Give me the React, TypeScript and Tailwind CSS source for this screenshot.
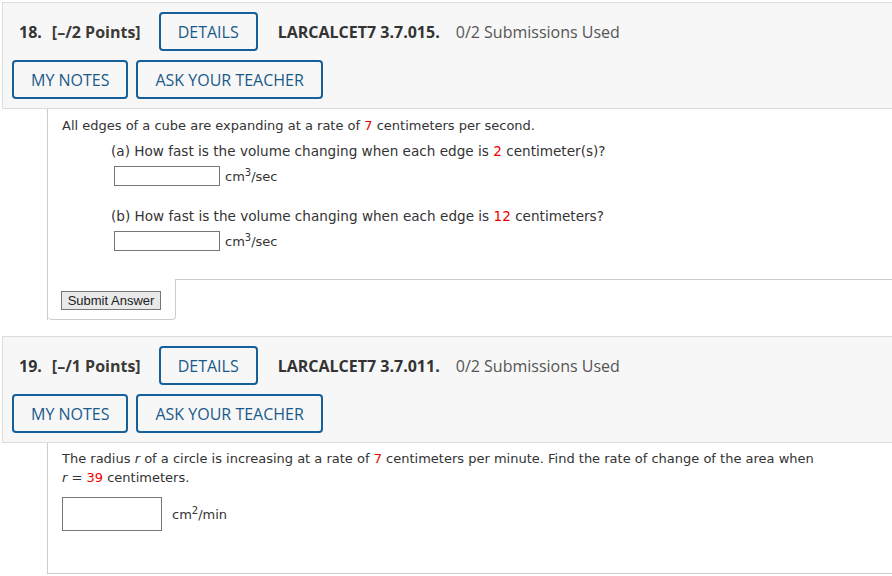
import React from 'react'

// ─── Header ─────────────────────────────────────────────────────────────────

function HeaderButton({ label }: { label: string }) {
  return (
    <button className="flex h-[39px] items-center rounded-[4px] border-2 border-[#16609a] bg-transparent px-[17px] text-[16px] uppercase text-[#1a5a8a]">
      {label}
    </button>
  )
}

function QuestionHeader({ num, points, code }: { num: number; points: string; code: string }) {
  return (
    <div className="ml-[2px] mr-[-20px] border border-[#dcdcdc] bg-[#f7f7f7] px-[9px] pb-[9px] pt-[9px] font-['Open_Sans',sans-serif]">
      <div className="flex h-[39px] items-center">
        <span className="ml-[7px] text-[16px] font-bold text-[#333]">{num}.</span>
        <span className="ml-[10px] text-[16px] font-bold text-[#3c3a36]">[–/{points} Points]</span>
        <div className="ml-[18px]">
          <HeaderButton label="Details" />
        </div>
        <span className="ml-[20px] text-[16px] font-bold text-[#333]">{code}</span>
        <span className="ml-[16px] text-[16px] text-[#555]">0/2 Submissions Used</span>
      </div>
      <div className="mt-[9px] flex gap-[8px]">
        <HeaderButton label="My Notes" />
        <HeaderButton label="Ask Your Teacher" />
      </div>
    </div>
  )
}

// ─── Bits ───────────────────────────────────────────────────────────────────

const Red = ({ children }: { children: React.ReactNode }) => <span className="text-[#e00]">{children}</span>

function Answer({ unit, sup }: { unit: string; sup: string }) {
  return (
    <div className="flex items-center text-[13px]">
      <input className="h-[20px] w-[106px] border border-[#767676] bg-white" />
      <span className="ml-[5px]">
        cm<sup className="text-[10px]">{sup}</sup>/{unit}
      </span>
    </div>
  )
}

// ─── App ────────────────────────────────────────────────────────────────────

export default function App() {
  return (
    <div className="h-[576px] w-[892px] overflow-hidden bg-white pt-[2px] text-[#333]">
      {/* Question 18 */}
      <QuestionHeader num={18} points="2" code="LARCALCET7 3.7.015." />
      <div className="ml-[47px] mr-[-20px] border-l border-[#ccc] font-['DejaVu_Sans',Verdana,sans-serif] text-[13px] leading-[19px]">
        <div className="h-[171px] border-b border-[#ccc] pl-[14px] pt-[7px]">
          <p>
            All edges of a cube are expanding at a rate of <Red>7</Red> centimeters per second.
          </p>
          <div className="ml-[49px] mt-[7px] text-[13.6px]">
            <p>
              (a) How fast is the volume changing when each edge is <Red>2</Red> centimeter(s)?
            </p>
            <div className="ml-[3px] mt-[5px]">
              <Answer unit="sec" sup="3" />
            </div>
            <p className="mt-[21px]">
              (b) How fast is the volume changing when each edge is <Red>12</Red> centimeters?
            </p>
            <div className="ml-[3px] mt-[5px]">
              <Answer unit="sec" sup="3" />
            </div>
          </div>
        </div>
        <div className="-mt-px flex">
          <div className="h-[41px] w-[128px] rounded-b-[4px] border-b border-r border-[#ccc] bg-white pl-[13px] pt-[12px]">
            <button className="h-[19px] w-[100px] border border-[#767676] bg-[#e9e9e9] font-['Liberation_Sans',Arial,sans-serif] text-[13px] leading-[17px] text-[#222]">
              Submit Answer
            </button>
          </div>
        </div>
      </div>

      {/* spacer */}
      <div className="h-[16px]" />

      {/* Question 19 */}
      <QuestionHeader num={19} points="1" code="LARCALCET7 3.7.011." />
      <div className="ml-[47px] mr-[-20px] h-[131px] border-b border-l border-[#ccc] pl-[14px] pt-[6px] font-['DejaVu_Sans',Tahoma,sans-serif] text-[13px] leading-[19px]">
        <p>
          The radius <i>r</i> of a circle is increasing at a rate of <Red>7</Red> centimeters per minute. Find the rate of change of the area when
          <br />
          <i>r</i> = <Red>39</Red> centimeters.
        </p>
        <div className="mt-[10px] flex items-center">
          <input className="h-[34px] w-[100px] border border-[#767676] bg-white" />
          <span className="ml-[10px]">
            cm<sup className="text-[10px]">2</sup>/min
          </span>
        </div>
      </div>
    </div>
  )
}
